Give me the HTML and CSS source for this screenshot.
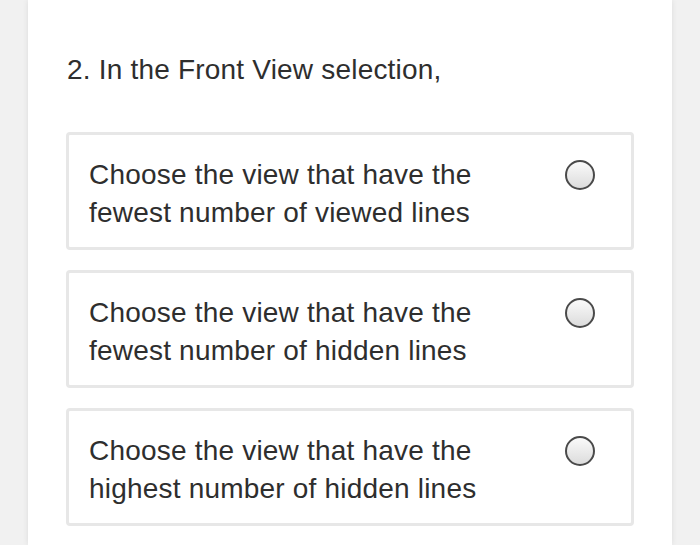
FILE: index.html
```html
<!DOCTYPE html>
<html>
<head>
<meta charset="utf-8">
<link rel="stylesheet" href="styles.css">
</head>
<body>
<div class="card">
  <div class="question">2. In the Front View selection,</div>
  <div class="options">
    <label class="option">
      <span class="text">Choose the view that have the<br>fewest number of viewed lines</span>
      <span class="radio"></span>
    </label>
    <label class="option">
      <span class="text">Choose the view that have the<br>fewest number of hidden lines</span>
      <span class="radio"></span>
    </label>
    <label class="option">
      <span class="text">Choose the view that have the<br>highest number of hidden lines</span>
      <span class="radio"></span>
    </label>
  </div>
</div>
</body>
</html>
```
FILE: styles.css
```css
html, body {
  margin: 0;
  padding: 0;
  height: 100%;
}
body {
  background: #f1f1f1;
  font-family: "Liberation Sans", Arial, Helvetica, sans-serif;
  color: #2e2e2e;
  overflow: hidden;
}
.card {
  background: #ffffff;
  margin: 0 28px;
  height: 545px;
  padding: 51px 38px 0 38px;
  box-sizing: border-box;
  box-shadow: 0 0 6px rgba(0, 0, 0, 0.09);
}
.question {
  font-size: 28px;
  line-height: 38px;
  padding-left: 1px;
  letter-spacing: 0.2px;
}
.options {
  display: flex;
  flex-direction: column;
  gap: 20px;
  margin-top: 43px;
}
.option {
  display: flex;
  justify-content: space-between;
  align-items: flex-start;
  border: 3px solid #e7e7e7;
  border-radius: 4px;
  padding: 21px 36px 15px 20px;
  box-sizing: border-box;
  height: 118px;
}
.text {
  font-size: 28px;
  line-height: 38px;
  letter-spacing: 0.2px;
}
.radio {
  width: 30px;
  height: 30px;
  box-sizing: border-box;
  border: 2px solid #4a4a4a;
  border-radius: 50%;
  background: linear-gradient(#fafafa, #dcdcdc);
  margin-top: 4px;
  flex-shrink: 0;
}
```
